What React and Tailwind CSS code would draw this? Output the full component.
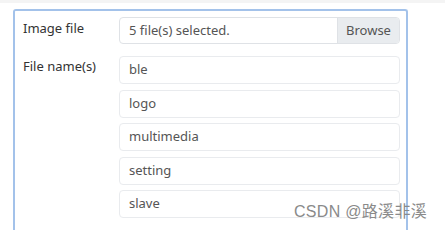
import React from 'react';

const NAMES = ['ble', 'logo', 'multimedia', 'setting', 'slave'];

export default function App() {
  return (
    <div
      className="relative w-[445px] h-[230px] overflow-hidden bg-white"
      style={{ fontFamily: '"Noto Sans", "Open Sans", sans-serif' }}
    >
      <div className="h-[3px] bg-[#f4f4f4]" />
      <div className="ml-[13px] mt-[6px] w-[395px] h-[240px] border-t-2 border-x-2 border-solid border-[#a3c2ea] rounded-t-[3px] pl-[8px] pr-[6px] pt-[6px]">
        {/* Image file */}
        <div className="flex">
          <div className="w-[96px] pt-[2px] text-[13px] text-[#333]">Image file</div>
          <div className="flex-1 flex h-[27px] border border-[#dfe2e6] rounded-[4px] overflow-hidden">
            <div className="flex-1 flex items-center pl-[9px] text-[13px] text-[#555]">5 file(s) selected.</div>
            <div className="w-[62px] flex items-center justify-center bg-[#e9ecef] border-l border-[#dfe2e6] text-[13px] text-[#555]">
              Browse
            </div>
          </div>
        </div>
        {/* File names */}
        <div className="flex mt-[12px]">
          <div className="w-[96px] pt-[1px] text-[13px] text-[#333]">File name(s)</div>
          <div className="flex-1 flex flex-col gap-[5.5px]">
            {NAMES.map((n) => (
              <div
                key={n}
                className="h-[28px] flex items-center pl-[9px] border border-[#e9ebee] rounded-[4px] text-[13px] text-[#555]"
              >
                {n}
              </div>
            ))}
          </div>
        </div>
      </div>
      <div
        className="absolute left-[294px] top-[200px] text-[16px] text-[#8a8a8a] tracking-[0.3px]"
        style={{ fontFamily: '"Liberation Sans", "Noto Sans CJK SC", sans-serif' }}
      >
        CSDN @路溪非溪
      </div>
    </div>
  );
}
